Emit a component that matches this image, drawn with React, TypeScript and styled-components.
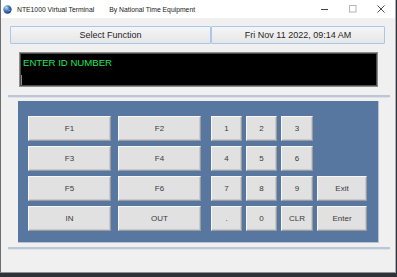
import React from 'react';
import styled, { createGlobalStyle } from 'styled-components';

const GlobalStyle = createGlobalStyle`
  html, body {
    margin: 0;
    padding: 0;
    background: #2f3236;
    overflow: hidden;
  }
  * {
    box-sizing: border-box;
  }
`;

const Window = styled.div`
  width: 396px;
  height: 273px;
  display: flex;
  flex-direction: column;
  background: #f0f0f0;
  border-left: 1px solid #6a6f76;
  border-right: 1px solid #a9adb2;
  border-bottom: 1px solid #8d9196;
  font-family: "Liberation Sans", Arial, sans-serif;
`;

const TitleBar = styled.div`
  height: 18px;
  flex: none;
  display: flex;
  align-items: center;
  background: #ffffff;
  padding-left: 2px;
`;

const TitleText = styled.span`
  font-size: 6.8px;
  color: #1a1a1a;
  margin-left: 5px;
  white-space: pre;
`;

const TitleControls = styled.div`
  margin-left: auto;
  display: flex;
  align-items: center;
  height: 100%;
`;

const ControlSlot = styled.div`
  width: 28px;
  height: 100%;
  display: flex;
  align-items: center;
  justify-content: center;
`;

const Content = styled.div`
  flex: 1;
  display: flex;
  flex-direction: column;
  padding: 0 5px 0 7px;
`;

const HeaderRow = styled.div`
  display: flex;
  margin: 8px 4px 0 2px;
  height: 18px;
`;

const HeaderButton = styled.div<{ $width: number }>`
  width: ${(p) => p.$width}px;
  height: 18px;
  display: flex;
  align-items: center;
  justify-content: center;
  border: 1px solid #a9c7ea;
  border-radius: 1px;
  background: linear-gradient(#f5f5f5, #e6e6e6);
  font-size: 9px;
  color: #1e1e1e;
`;

const Display = styled.div`
  margin: 8px 12px 0 11px;
  height: 35px;
  background: #000000;
  border: 1px solid #8c8c8c;
  box-shadow: inset 0 0 0 1px #4a4a4a;
  display: flex;
  flex-direction: column;
  padding: 4px 3px 0 3px;
`;

const Prompt = styled.div`
  color: #1fe55c;
  font-size: 9.6px;
  line-height: 11px;
`;

const Caret = styled.div`
  width: 1px;
  height: 10px;
  margin-top: 7px;
  margin-left: -2px;
  background: #8a8a8a;
`;

const Separator = styled.div<{ $top: number }>`
  margin-top: ${(p) => p.$top}px;
  height: 3px;
  background: #bcc6d5;
  border-bottom: 1px solid #dde2ea;
`;

const Panel = styled.div`
  margin: 3px 11px 0 10px;
  height: 142px;
  background: #5877a0;
  border-right: 1px solid #b9c3d1;
  border-bottom: 1px solid #b9c3d1;
  display: flex;
  gap: 10px;
  padding: 15px 0 0 10px;
`;

const FunctionGrid = styled.div`
  display: grid;
  grid-template-columns: 83px 83px;
  grid-auto-rows: 25px;
  column-gap: 7px;
  row-gap: 5px;
`;

const KeyGrid = styled.div`
  display: grid;
  grid-template-columns: 31px 31px 32px 50px;
  grid-auto-rows: 25px;
  column-gap: 4px;
  row-gap: 5px;
`;

const Key = styled.button<{ $col?: number }>`
  ${(p) => (p.$col ? `grid-column: ${p.$col};` : '')}
  margin: 0;
  padding: 0;
  background: #e1e1e1;
  border: 1px solid;
  border-color: #f7f7f7 #9c9c9c #9c9c9c #f7f7f7;
  box-shadow: inset -1px -1px 0 #c9c9c9;
  font-family: "Liberation Sans", Arial, sans-serif;
  font-size: 8px;
  color: #3a3a3a;
  display: flex;
  align-items: center;
  justify-content: center;
`;

const Footer = styled.div`
  flex: 1;
`;

const Globe = () => (
  <svg width="9" height="9" viewBox="0 0 10 10">
    <defs>
      <radialGradient id="g" cx="35%" cy="30%" r="70%">
        <stop offset="0" stopColor="#d8e8ff" />
        <stop offset="0.45" stopColor="#4f7fd0" />
        <stop offset="1" stopColor="#1c3f8a" />
      </radialGradient>
    </defs>
    <circle cx="5" cy="5" r="4.6" fill="url(#g)" />
    <path d="M2 4.5 Q4 3 5 5 T8 6" stroke="#7fbf6a" strokeWidth="1" fill="none" />
  </svg>
);

const functionKeys = ['F1', 'F2', 'F3', 'F4', 'F5', 'F6', 'IN', 'OUT'];

export default function App() {
  return (
    <>
      <GlobalStyle />
      <Window>
        <TitleBar>
          <Globe />
          <TitleText>NTE1000 Virtual Terminal        By National Time Equipment</TitleText>
          <TitleControls>
            <ControlSlot>
              <svg width="8" height="8" viewBox="0 0 8 8">
                <line x1="0" y1="4.5" x2="7" y2="4.5" stroke="#444" strokeWidth="1" />
              </svg>
            </ControlSlot>
            <ControlSlot>
              <svg width="8" height="8" viewBox="0 0 8 8">
                <rect x="0.5" y="0.5" width="6.5" height="6.5" fill="none" stroke="#b5b5b5" strokeWidth="1" />
              </svg>
            </ControlSlot>
            <ControlSlot>
              <svg width="8" height="8" viewBox="0 0 8 8">
                <path d="M0.5 0.5 L7.5 7.5 M7.5 0.5 L0.5 7.5" stroke="#333" strokeWidth="0.9" />
              </svg>
            </ControlSlot>
          </TitleControls>
        </TitleBar>
        <Content>
          <HeaderRow>
            <HeaderButton $width={201}>Select Function</HeaderButton>
            <HeaderButton $width={174}>Fri Nov 11 2022, 09:14 AM</HeaderButton>
          </HeaderRow>
          <Display>
            <Prompt>ENTER ID NUMBER</Prompt>
            <Caret />
          </Display>
          <Separator $top={8} />
          <Panel>
            <FunctionGrid>
              {functionKeys.map((k) => (
                <Key key={k}>{k}</Key>
              ))}
            </FunctionGrid>
            <KeyGrid>
              <Key>1</Key>
              <Key>2</Key>
              <Key>3</Key>
              <Key $col={1}>4</Key>
              <Key>5</Key>
              <Key>6</Key>
              <Key $col={1}>7</Key>
              <Key>8</Key>
              <Key>9</Key>
              <Key>Exit</Key>
              <Key>.</Key>
              <Key>0</Key>
              <Key>CLR</Key>
              <Key>Enter</Key>
            </KeyGrid>
          </Panel>
          <Separator $top={4} />
          <Footer />
        </Content>
      </Window>
    </>
  );
}
